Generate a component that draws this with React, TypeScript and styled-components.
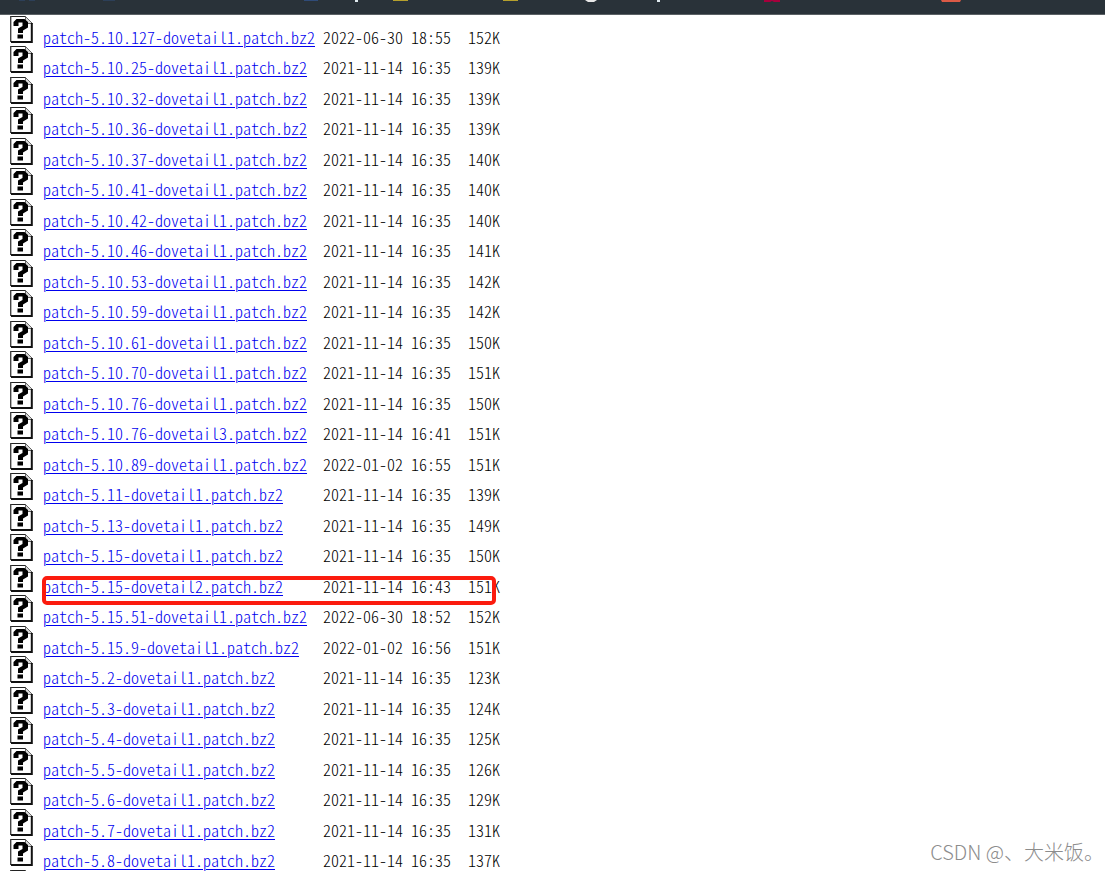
import React from 'react';
import styled, { createGlobalStyle } from 'styled-components';

const GlobalStyle = createGlobalStyle`
  * { box-sizing: border-box; }
  body { margin: 0; background: #fff; }
`;

const Page = styled.div`
  position: relative;
  height: 100vh;
  overflow: hidden;
  background: #fff;
`;

const TopBar = styled.header`
  height: 15px;
  background: #293239;
  border-bottom: 1px solid #5b6165;
`;

const Strip = styled.svg`
  display: block;
`;

const Listing = styled.main`
  padding-left: 10px;
`;

const Files = styled.table`
  border-collapse: collapse;
  table-layout: fixed;
  width: 490px;
  font: 300 16px/18px "Noto Sans CJK SC", monospace;
  font-feature-settings: "hwid";
  color: #000;
`;

const Row = styled.tr`
  height: 31px;
  &:nth-child(even) { height: 30px; }
`;

const Cell = styled.td<{ $width: number }>`
  width: ${(p) => p.$width}px;
  padding: 0;
  vertical-align: bottom;
  white-space: pre;
`;

const IconSvg = styled.svg`
  display: block;
`;

const Highlighted = styled.div`
  position: relative;
`;

const Marker = styled.span`
  position: absolute;
  top: -1px;
  left: -1px;
  width: 454px;
  height: 29px;
  border: 4px solid #fb1b0e;
  border-radius: 5px;
  pointer-events: none;
`;

const FileLink = styled.a`
  color: #0000ee;
  text-decoration: underline;
  text-decoration-thickness: 1px;
  text-underline-offset: 2px;
`;

const Watermark = styled.div`
  position: absolute;
  right: 1px;
  bottom: 5px;
  font: 300 20px/28px "Noto Sans CJK SC", sans-serif;
  color: #8c8c8c;
`;

const files: [string, string, string][] = [
  ['5.10.127-dovetail1', '2022-06-30 18:55', '152K'],
  ['5.10.25-dovetail1', '2021-11-14 16:35', '139K'],
  ['5.10.32-dovetail1', '2021-11-14 16:35', '139K'],
  ['5.10.36-dovetail1', '2021-11-14 16:35', '139K'],
  ['5.10.37-dovetail1', '2021-11-14 16:35', '140K'],
  ['5.10.41-dovetail1', '2021-11-14 16:35', '140K'],
  ['5.10.42-dovetail1', '2021-11-14 16:35', '140K'],
  ['5.10.46-dovetail1', '2021-11-14 16:35', '141K'],
  ['5.10.53-dovetail1', '2021-11-14 16:35', '142K'],
  ['5.10.59-dovetail1', '2021-11-14 16:35', '142K'],
  ['5.10.61-dovetail1', '2021-11-14 16:35', '150K'],
  ['5.10.70-dovetail1', '2021-11-14 16:35', '151K'],
  ['5.10.76-dovetail1', '2021-11-14 16:35', '150K'],
  ['5.10.76-dovetail3', '2021-11-14 16:41', '151K'],
  ['5.10.89-dovetail1', '2022-01-02 16:55', '151K'],
  ['5.11-dovetail1', '2021-11-14 16:35', '139K'],
  ['5.13-dovetail1', '2021-11-14 16:35', '149K'],
  ['5.15-dovetail1', '2021-11-14 16:35', '150K'],
  ['5.15-dovetail2', '2021-11-14 16:43', '151K'],
  ['5.15.51-dovetail1', '2022-06-30 18:52', '152K'],
  ['5.15.9-dovetail1', '2022-01-02 16:56', '151K'],
  ['5.2-dovetail1', '2021-11-14 16:35', '123K'],
  ['5.3-dovetail1', '2021-11-14 16:35', '124K'],
  ['5.4-dovetail1', '2021-11-14 16:35', '125K'],
  ['5.5-dovetail1', '2021-11-14 16:35', '126K'],
  ['5.6-dovetail1', '2021-11-14 16:35', '129K'],
  ['5.7-dovetail1', '2021-11-14 16:35', '131K'],
  ['5.8-dovetail1', '2021-11-14 16:35', '137K'],
];

const marked = '5.15-dovetail2';

function UnknownIcon() {
  return (
    <IconSvg width="23" height="30" viewBox="0 0 23 30" aria-hidden="true">
      <path d="M0.5 0.5H15.5L22 7V26H0.5Z" fill="#fff" />
      <path d="M0 0.5H16" stroke="#222" />
      <path d="M0.7 0V26" stroke="#444" strokeWidth="1.4" />
      <path d="M15.5 0.5L22.5 7.5H15.5Z" fill="#d8d8d8" stroke="#666" />
      <path d="M21.8 7V26.5M1 26H22.8" fill="none" stroke="#111" strokeWidth="2" />
      <path d="M3.5 6L6.5 3H14.5L18 6V11.5L13 14.5V17H8V12.5L12.5 10V6.5H8.5V10H3.5Z" />
      <rect x="7.5" y="18.5" width="5.5" height="4" />
    </IconSvg>
  );
}

export default function App() {
  return (
    <>
      <GlobalStyle />
      <Page>
        <TopBar>
          <Strip width="1105" height="3" aria-hidden="true">
            <path d="M19 0h6M29 0h6M103 0h12" stroke="#2c3f58" strokeWidth="2" />
            <path d="M304 0h14" stroke="#2f4b78" strokeWidth="2" />
            <path d="M355 0h3v2h-3zM657 0h3v2h-3z" fill="#dfe9ee" />
            <path d="M393 0h15v1h-15zM503 0h15v1h-15z" fill="#b5a02d" />
            <path d="M585 0h12l-3 2h-6z" fill="#e8e8e8" />
            <path d="M764 0h16v2h-6l-2-1-2 1h-6z" fill="#a6003c" />
            <path d="M941 0h20l-1 2h-18z" fill="#db5a46" />
          </Strip>
        </TopBar>
        <Listing>
          <Files>
            <tbody>
              {files.map(([name, date, size]) => (
                <Row key={name}>
                  <Cell $width={33}><UnknownIcon /></Cell>
                  <Cell $width={280}>
                    {name === marked ? (
                      <Highlighted>
                        <FileLink href="#">{`patch-${name}.patch.bz2`}</FileLink>
                        <Marker />
                      </Highlighted>
                    ) : (
                      <FileLink href="#">{`patch-${name}.patch.bz2`}</FileLink>
                    )}
                  </Cell>
                  <Cell $width={145}>{date}</Cell>
                  <Cell $width={32}>{size}</Cell>
                </Row>
              ))}
              <Row>
                <Cell $width={33}><UnknownIcon /></Cell>
              </Row>
            </tbody>
          </Files>
        </Listing>
        <Watermark>CSDN @、大米饭。</Watermark>
      </Page>
    </>
  );
}
